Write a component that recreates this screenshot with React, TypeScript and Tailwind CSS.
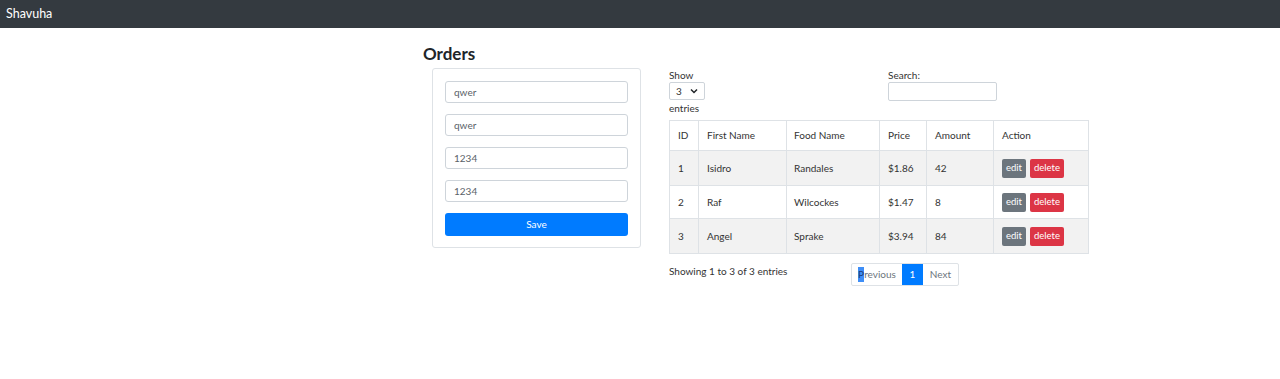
import React from "react";

const rows = [
  { id: 1, first: "Isidro", food: "Randales", price: "$1.86", amount: "42" },
  { id: 2, first: "Raf", food: "Wilcockes", price: "$1.47", amount: "8" },
  { id: 3, first: "Angel", food: "Sprake", price: "$3.94", amount: "84" },
];

export default function App() {
  return (
    <div className="min-h-[379px] bg-white text-[#212529]" style={{ fontFamily: 'Lato, "Open Sans", sans-serif' }}>
      <nav className="h-[28px] bg-[#343a40] flex items-center px-[6px]">
        <span className="text-white text-[12.5px] leading-none">Shavuha</span>
      </nav>
      <div className="flex pl-[423px] pt-[14px]">
        <div className="w-[218px]">
          <h2 className="text-[17px] font-bold leading-[24px] h-[26px]">Orders</h2>
          <div className="ml-[9px] w-[209px] border border-[#dee2e6] rounded-[3px] px-[12px] pt-[12px] pb-[11px] flex flex-col gap-[11px]">
            {["qwer", "qwer", "1234", "1234"].map((v, i) => (
              <div key={i} className="h-[22px] border border-[#ced4da] rounded-[3px] flex items-center px-[8px] text-[10px] text-[#5a6268]">
                {v}
              </div>
            ))}
            <button className="h-[23px] bg-[#007bff] rounded-[3px] text-white text-[10px]">Save</button>
          </div>
        </div>
        <div className="ml-[28px] pt-[27px] w-[420px] text-[10px] text-[#333]">
          <div className="flex">
            <div className="w-[219px]">
              <div className="leading-[13px]">Show</div>
              <div className="w-[36px] h-[18px] border border-[#ced4da] rounded-[2px] flex items-center justify-between px-[6px] text-[10px]">
                <span>3</span>
                <svg width="8" height="6" viewBox="0 0 8 6"><path d="M1 1.5 L4 4.5 L7 1.5" stroke="#212529" strokeWidth="1.5" fill="none" /></svg>
              </div>
              <div className="leading-[13px] mt-[2px]">entries</div>
            </div>
            <div>
              <div className="leading-[13px]">Search:</div>
              <div className="w-[109px] h-[19px] border border-[#ced4da] rounded-[2px]" />
            </div>
          </div>
          <table className="mt-[5px] w-[420px] border-collapse border border-[#dee2e6] text-[10px]">
            <thead>
              <tr className="h-[30px]">
                <th className="w-[29px] font-normal text-left px-[8px] border border-[#dee2e6]">ID</th>
                <th className="w-[88px] font-normal text-left px-[8px] border border-[#dee2e6]">First Name</th>
                <th className="w-[93px] font-normal text-left px-[7px] border border-[#dee2e6]">Food Name</th>
                <th className="w-[47px] font-normal text-left px-[8px] border border-[#dee2e6]">Price</th>
                <th className="w-[67px] font-normal text-left px-[8px] border border-[#dee2e6]">Amount</th>
                <th className="font-normal text-left px-[8px] border border-[#dee2e6]">Action</th>
              </tr>
            </thead>
            <tbody>
              {rows.map((r, i) => (
                <tr key={r.id} className={i % 2 === 0 ? "h-[35px] bg-[#f2f2f2]" : "h-[33px] bg-white"}>
                  <td className="px-[8px] border border-[#dee2e6]">{r.id}</td>
                  <td className="px-[8px] border border-[#dee2e6]">{r.first}</td>
                  <td className="px-[7px] border border-[#dee2e6]">{r.food}</td>
                  <td className="px-[8px] border border-[#dee2e6]">{r.price}</td>
                  <td className="px-[8px] border border-[#dee2e6]">{r.amount}</td>
                  <td className="px-[8px] border border-[#dee2e6]">
                    <div className="flex gap-[4px] pt-[1px]">
                      <span className="h-[19px] w-[24px] flex items-center justify-center bg-[#6c757d] text-white rounded-[2px] text-[9.5px]">edit</span>
                      <span className="h-[19px] w-[34px] flex items-center justify-center bg-[#dc3545] text-white rounded-[2px] text-[9.5px]">delete</span>
                    </div>
                  </td>
                </tr>
              ))}
            </tbody>
          </table>
          <div className="flex items-start mt-[9px]">
            <div className="w-[182px] leading-[16px]">Showing 1 to 3 of 3 entries</div>
            <div className="flex h-[23px] border border-[#dee2e6] rounded-[2px] text-[10px]">
              <div className="w-[50px] flex items-center justify-center text-[#6c757d]">
                <span className="bg-[#3e8ef7] text-[#1c3c78]">P</span>revious
              </div>
              <div className="w-[21px] flex items-center justify-center bg-[#007bff] text-white">1</div>
              <div className="w-[35px] flex items-center justify-center text-[#6c757d]">Next</div>
            </div>
          </div>
        </div>
      </div>
    </div>
  );
}
